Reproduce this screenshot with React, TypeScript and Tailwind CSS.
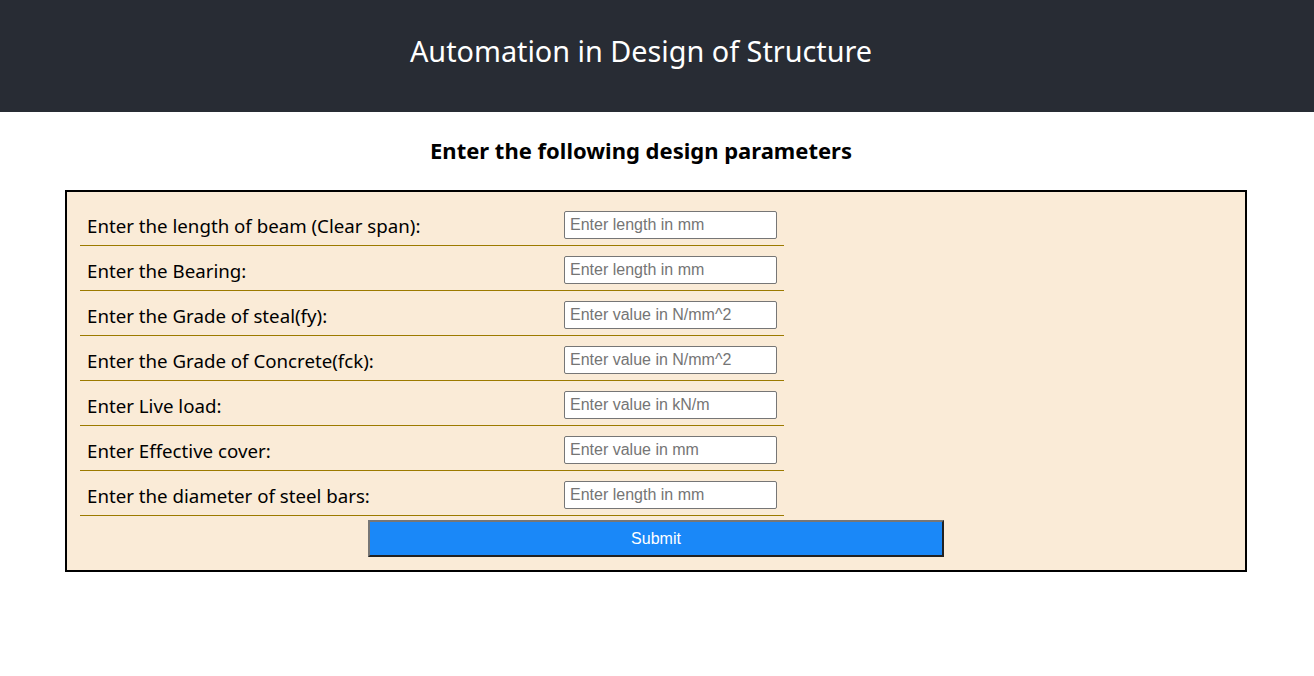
const fields = [
  { label: 'Enter the length of beam (Clear span):', placeholder: 'Enter length in mm' },
  { label: 'Enter the Bearing:', placeholder: 'Enter length in mm' },
  { label: 'Enter the Grade of steal(fy):', placeholder: 'Enter value in N/mm^2' },
  { label: 'Enter the Grade of Concrete(fck):', placeholder: 'Enter value in N/mm^2' },
  { label: 'Enter Live load:', placeholder: 'Enter value in kN/m' },
  { label: 'Enter Effective cover:', placeholder: 'Enter value in mm' },
  { label: 'Enter the diameter of steel bars:', placeholder: 'Enter length in mm' },
]

export default function App() {
  return (
    <div className="min-h-screen bg-white font-['Noto_Sans',sans-serif]">
      <header className="flex h-[112px] justify-center bg-[#282c34] pr-[32px] pt-[30px]">
        <h1 className="text-[28.8px] leading-[42px] text-white">Automation in Design of Structure</h1>
      </header>

      <h2 className="mt-[23px] pr-[32px] text-center text-[22px] font-bold leading-[30px] text-black">
        Enter the following design parameters
      </h2>

      <form
        className="ml-[65px] mr-[67px] mt-[25px] border-2 border-black bg-[#faebd7] px-[13px] pb-[13px] pt-[9px]"
        onSubmit={(e) => e.preventDefault()}
      >
        <div className="w-[704px]">
          {fields.map((f) => (
            <div key={f.label} className="flex h-[45px] items-center border-b border-[#9c7a00] pt-[3px]">
              <label className="w-[484px] pl-[7px] pt-[3px] text-[18.7px] text-black">{f.label}</label>
              <input
                type="text"
                placeholder={f.placeholder}
                className="h-[28px] w-[213px] rounded-[2px] border border-[#767676] bg-white px-[5px] font-['Liberation_Sans',Arial,sans-serif] text-[16px] text-black placeholder:text-[#757575]"
              />
            </div>
          ))}
        </div>
        <div className="mt-[4px] flex justify-center">
          <button
            type="submit"
            className="h-[37px] w-[576px] border-2 border-t-[#767676] border-l-[#767676] border-b-[#222] border-r-[#222] bg-[#1a88f8] font-['Liberation_Sans',Arial,sans-serif] text-[16px] text-white"
          >
            Submit
          </button>
        </div>
      </form>
    </div>
  )
}
